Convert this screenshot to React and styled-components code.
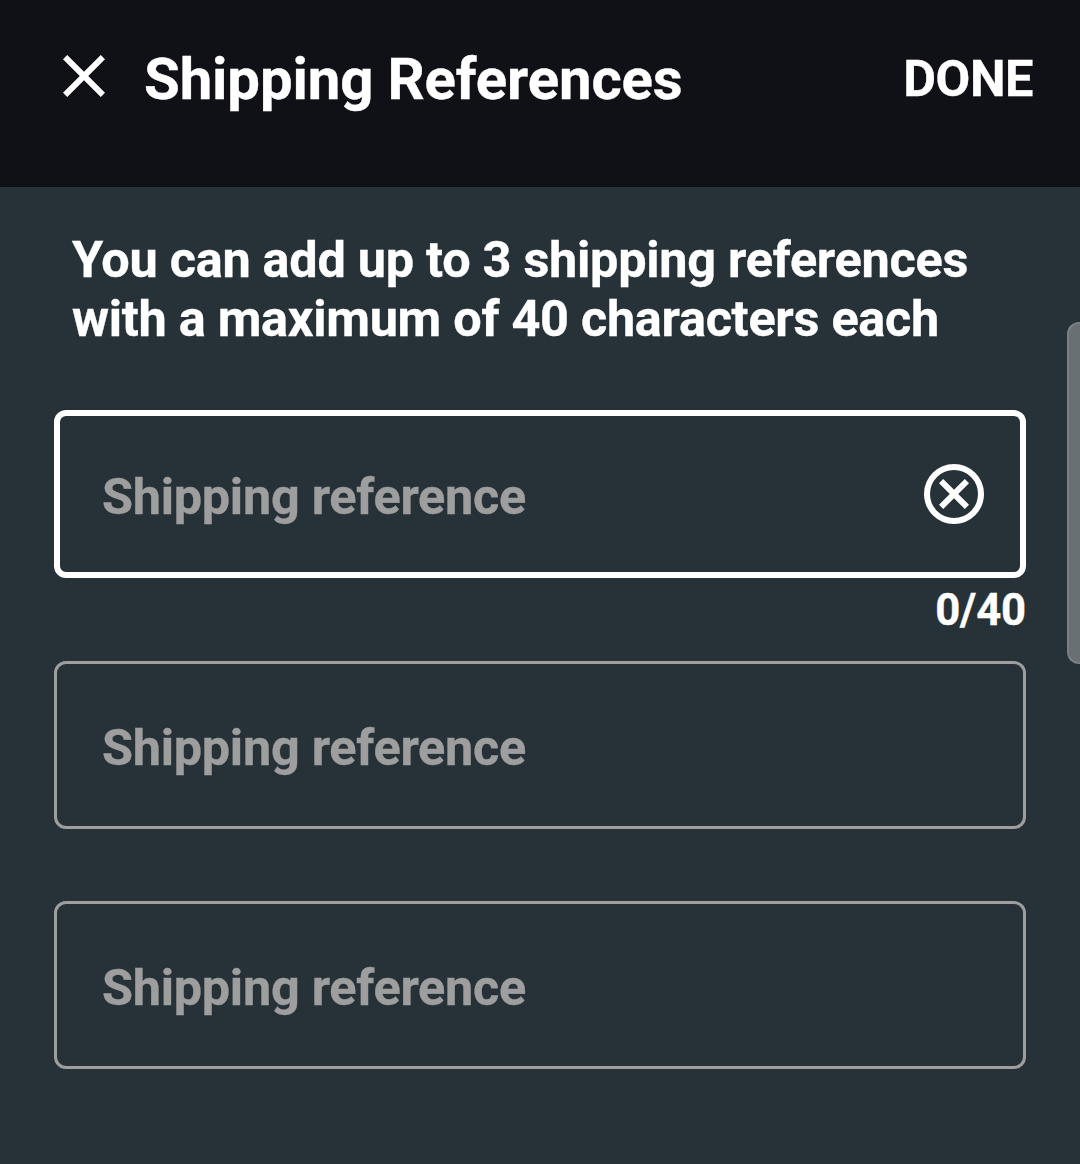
import React, { useState } from 'react';
import styled, { createGlobalStyle } from 'styled-components';

const GlobalStyle = createGlobalStyle `
  * {
    box-sizing: border-box;
  }
  body {
    margin: 0;
    background-color: #273238;
    font-family: Roboto, sans-serif;
    font-weight: bold;
    color: #fff;
    -webkit-text-stroke: 0.35px;
  }
`;
const Screen = styled.div `
  position: relative;
  height: 1164px;
  overflow: hidden;
  background-color: #273238;
`;
const Header = styled.header `
  display: flex;
  align-items: flex-start;
  height: 187px;
  padding: 40px 47px 0 48px;
  background-color: #101116;
`;
const IconButton = styled.button `
  display: flex;
  padding: 0;
  border: 0;
  background: none;
  color: inherit;
  cursor: pointer;
`;
const Icon = styled.svg `
  width: 72px;
  height: 72px;
  fill: currentColor;
`;
const Title = styled.h1 `
  flex: 1;
  margin: 3px 0 0 24px;
  font-size: 58.1px;
  line-height: 72px;
  letter-spacing: -0.12px;
  white-space: nowrap;
`;
const DoneButton = styled.button `
  margin-top: 3px;
  padding: 0;
  border: 0;
  background: none;
  color: inherit;
  font: inherit;
  font-size: 50.4px;
  line-height: 72px;
  letter-spacing: -0.4px;
  cursor: pointer;
`;
const Content = styled.main `
  padding: 43px 54px 0;
`;
const Description = styled.p `
  margin: 0 0 62px;
  padding-left: 18px;
  font-size: 50.4px;
  line-height: 59px;
  letter-spacing: -0.27px;
  white-space: nowrap;
`;
const Field = styled.div `
  display: flex;
  align-items: center;
  justify-content: space-between;
  height: 168px;
  border: ${props => props.$active ? '6px solid #fff' : '3px solid #9e9e9e'};
  border-radius: 12px;
  padding: ${props => props.$active ? '0 30px 0 42px' : '0 33px 0 45px'};
  cursor: text;
`;
const Placeholder = styled.span `
  padding-top: 6px;
  color: #9e9e9e;
  font-size: 50.4px;
  line-height: 60px;
  letter-spacing: -0.28px;
`;
const FieldFooter = styled.div `
  height: ${props => props.$active ? '83px' : '72px'};
  padding-top: 6px;
  text-align: right;
  font-size: 43.7px;
  line-height: 52px;
  letter-spacing: -0.15px;
`;
const ScrollThumb = styled.div `
  position: absolute;
  top: 322px;
  right: 0;
  width: 13px;
  height: 342px;
  border: 2px solid #7a7f81;
  border-right: 0;
  border-radius: 12px 0 0 12px;
  background-color: #687073;
`;

const CloseIcon = () => (
  <Icon viewBox="0 0 24 24">
    <path d="M19 6.41L17.59 5 12 10.59 6.41 5 5 6.41 10.59 12 5 17.59 6.41 19 12 13.41 17.59 19 19 17.59 13.41 12z" />
  </Icon>
);

const ClearIcon = () => (
  <Icon viewBox="0 0 24 24">
    <circle cx="12" cy="12" r="9" fill="none" stroke="currentColor" strokeWidth="2" />
    <path d="M17 8.4L15.6 7 12 10.6 8.4 7 7 8.4 10.6 12 7 15.6 8.4 17 12 13.4 15.6 17 17 15.6 13.4 12z" />
  </Icon>
);

const ReferenceField = ({ active, onSelect }) => (
  <div>
    <Field $active={active} onClick={onSelect}>
      <Placeholder>Shipping reference</Placeholder>
      {active && (
        <IconButton aria-label="clear">
          <ClearIcon />
        </IconButton>
      )}
    </Field>
    <FieldFooter $active={active}>{active && '0/40'}</FieldFooter>
  </div>
);

const App = () => {
  const [activeIndex, setActiveIndex] = useState(0);

  return (
    <Screen>
      <GlobalStyle />
      <Header>
        <IconButton aria-label="close">
          <CloseIcon />
        </IconButton>
        <Title>Shipping References</Title>
        <DoneButton>DONE</DoneButton>
      </Header>
      <Content>
        <Description>
          You can add up to 3 shipping references<br />
          with a maximum of 40 characters each
        </Description>
        {[0, 1, 2].map(index => (
          <ReferenceField
            key={index}
            active={index === activeIndex}
            onSelect={() => setActiveIndex(index)}
          />
        ))}
      </Content>
      <ScrollThumb />
    </Screen>
  );
};

export default App;
